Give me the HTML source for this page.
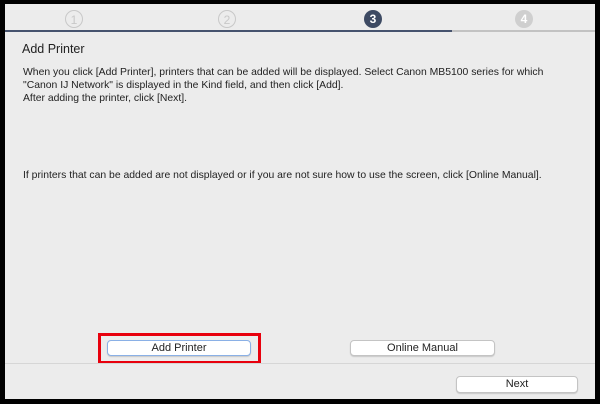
<!DOCTYPE html><html><head><style>
body{margin:0;width:600px;height:404px;background:#000;position:relative;overflow:hidden;font-family:"Liberation Sans",sans-serif;}
.win{position:absolute;left:5px;top:4px;width:590px;height:395px;background:#ececec;}
.a{position:absolute}
.c{position:absolute;width:18px;height:18px;border-radius:50%;top:6px;font-size:12px;font-weight:bold;text-align:center;line-height:18px;box-sizing:border-box}
.btn{position:absolute;background:#fff;border:1px solid #c4c4c4;border-radius:4px;font-size:11px;text-align:center;color:#222;box-shadow:0 1px 1px rgba(0,0,0,.15)}
p{margin:0}
</style></head><body>
<div class="win">
<div class="c" style="left:60px;border:1.5px solid #c8c8c8;color:#c8c8c8;font-weight:normal">1</div>
<div class="c" style="left:213px;border:1.5px solid #c8c8c8;color:#c8c8c8;font-weight:normal">2</div>
<div class="c" style="left:359px;background:#3d4a63;color:#fff">3</div>
<div class="c" style="left:510px;background:#cfcfcf;color:#fff">4</div>
<div class="a" style="left:0;top:26px;width:447px;height:2px;background:#46536e"></div>
<div class="a" style="left:447px;top:26px;width:143px;height:2px;background:#c2c2c2"></div>
<div class="a" style="left:17px;top:38px;font-size:12.5px;color:#222">Add Printer</div>
<div class="a" style="left:18px;top:62px;font-size:10.4px;line-height:13px;color:#222;width:570px;white-space:nowrap">
<p>When you click [Add Printer], printers that can be added will be displayed. Select Canon MB5100 series for which</p>
<p>"Canon IJ Network" is displayed in the Kind field, and then click [Add].</p>
<p>After adding the printer, click [Next].</p></div>
<div class="a" style="left:18px;top:166px;font-size:10.4px;color:#222;white-space:nowrap">If printers that can be added are not displayed or if you are not sure how to use the screen, click [Online Manual].</div>
<div class="a" style="left:93px;top:329px;width:157px;height:25px;border:3px solid #e8000d"></div>
<div class="btn" style="left:102px;top:336px;width:142px;height:14px;line-height:14px;border-color:#8ab0e6">Add Printer</div>
<div class="btn" style="left:345px;top:336px;width:143px;height:14px;line-height:14px">Online Manual</div>
<div class="a" style="left:0;top:359px;width:590px;height:1px;background:#d6d6d6"></div>
<div class="btn" style="left:451px;top:372px;width:120px;height:15px;line-height:15px">Next</div>
</div>
</body></html>
